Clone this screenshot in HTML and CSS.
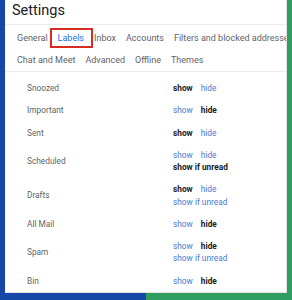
FILE: index.html
```html
<!DOCTYPE html>
<html lang="en">
<head>
    <meta charset="UTF-8">
    <meta name="viewport" content="width=device-width, initial-scale=1.0">
    <title>Settings</title>
    <link rel="stylesheet" href="styles.css">
</head>
<body>
    <div class="panel">
        <h1 class="title">Settings</h1>
        <nav class="tabs">
            <div class="tab-row">
                <span class="tab">General</span>
                <span class="tab active">Labels</span>
                <span class="tab">Inbox</span>
                <span class="tab">Accounts</span>
                <span class="tab">Filters and blocked addresses</span>
            </div>
            <div class="tab-row">
                <span class="tab">Chat and Meet</span>
                <span class="tab">Advanced</span>
                <span class="tab">Offline</span>
                <span class="tab">Themes</span>
            </div>
        </nav>

        <table class="labels">
            <tr>
                <td class="name">Snoozed</td>
                <td class="opts"><b>show</b><a>hide</a></td>
            </tr>
            <tr>
                <td class="name">Important</td>
                <td class="opts"><a>show</a><b>hide</b></td>
            </tr>
            <tr>
                <td class="name">Sent</td>
                <td class="opts"><b>show</b><a>hide</a></td>
            </tr>
            <tr>
                <td class="name">Scheduled</td>
                <td class="opts"><a>show</a><a>hide</a><br><b>show if unread</b></td>
            </tr>
            <tr>
                <td class="name">Drafts</td>
                <td class="opts"><b>show</b><a>hide</a><br><a>show if unread</a></td>
            </tr>
            <tr>
                <td class="name">All Mail</td>
                <td class="opts"><a>show</a><b>hide</b></td>
            </tr>
            <tr>
                <td class="name">Spam</td>
                <td class="opts"><a>show</a><b>hide</b><br><a>show if unread</a></td>
            </tr>
            <tr>
                <td class="name">Bin</td>
                <td class="opts"><a>show</a><b>hide</b></td>
            </tr>
        </table>
    </div>
</body>
</html>
```

FILE: styles.css
```css
html, body {
    margin: 0;
    padding: 0;
    height: 300px;
    overflow: hidden;
}
body {
    font-family: Roboto, Arial, sans-serif;
    background: linear-gradient(to right, #1447a8 50%, #2e9d5f 50%);
}
.panel {
    margin: 0 5px 0 5px;
    height: 293px;
    background-color: #fff;
    border-right: 1px solid #e2e2e2;
    border-bottom: 1px solid #e2e2e2;
    box-sizing: border-box;
    overflow: hidden;
}
.title {
    margin: 0;
    padding: 2px 0 0 7px;
    height: 22px;
    font-size: 14.5px;
    font-weight: normal;
    color: #202124;
    border-bottom: 1px solid #ececec;
}
.tabs {
    padding: 2px 0 0 7px;
    border-bottom: 1px solid #ececec;
    height: 44px;
}
.tab-row {
    display: flex;
    white-space: nowrap;
    height: 22px;
    align-items: center;
}
.tab {
    font-size: 9px;
    color: #5f6368;
    padding: 0 5px;
    line-height: 18px;
}
.tab.active {
    position: relative;
    color: #1a73e8;
}
/* red marker box drawn over the Labels tab */
.tab.active::after {
    content: "";
    position: absolute;
    left: -3px;
    right: -4px;
    top: -1px;
    bottom: -1px;
    border: 2px solid #d62d23;
}
.labels {
    border-collapse: collapse;
    margin-top: 5px;
    font-size: 8.3px;
}
.labels td {
    padding: 5px 0;
    line-height: 12.25px;
    vertical-align: middle;
}
.labels .name {
    width: 146px;
    padding-left: 22px;
    color: #5f6368;
}
.labels .opts {
    white-space: nowrap;
}
.labels b {
    color: #202124;
    margin-right: 8px;
}
.labels a {
    color: #4a78d0;
    margin-right: 8px;
}
```
